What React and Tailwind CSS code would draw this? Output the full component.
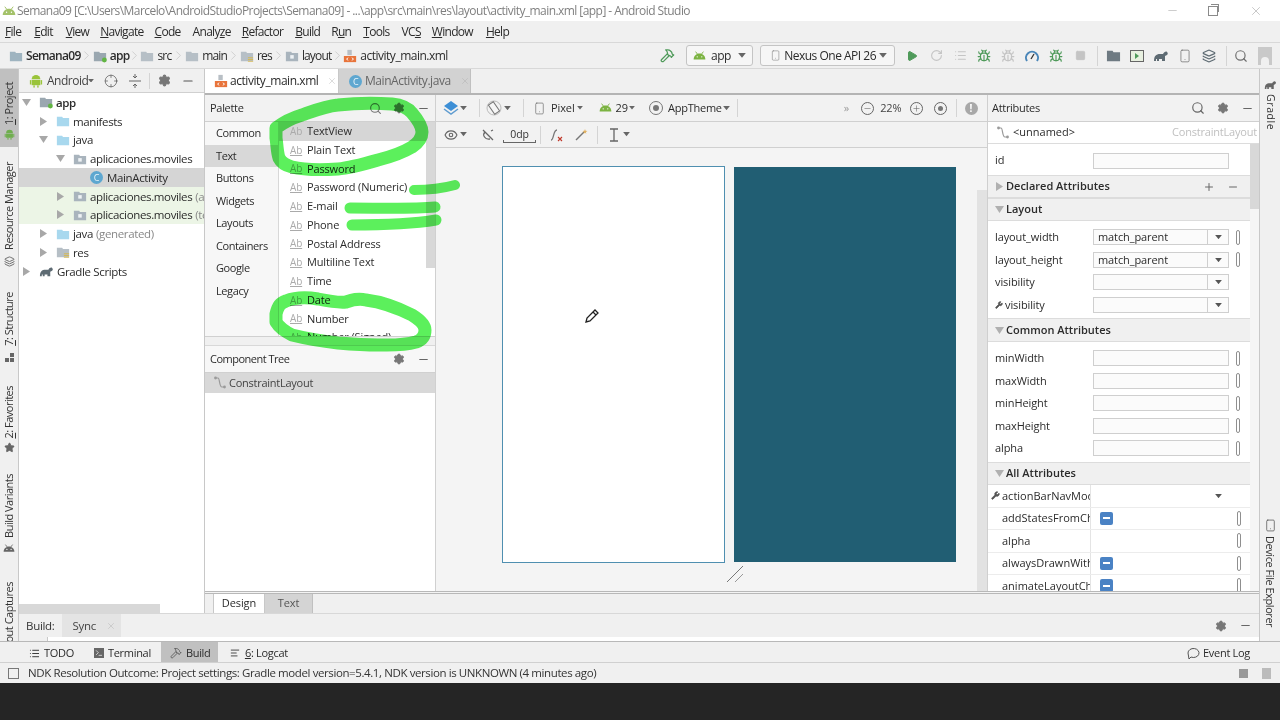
import React from "react";
import { Search, Settings, Minus, Plus, Hammer, Play, Square, ChevronRight, Eye, Smartphone, Star, Wrench, Terminal, List, AlignLeft, X, Crosshair, Bug, RotateCw, Layers } from "lucide-react";

const font = { fontFamily: '"Open Sans","Noto Sans",sans-serif' };

const Folder = ({ c = "#9aa7b0", size = 14, dot, lines }) => (
  <svg width={size} height={size} viewBox="0 0 16 16" className="shrink-0">
    <path d="M1 3h6l1 1.500h7V14H1z" fill={c} />
    {dot && <circle cx="13" cy="12.500" r="2.800" fill="#62b543" />}
    {lines && <path d="M9 10h6M9 12h6M9 14h6" stroke="#d8b84a" strokeWidth="1" />}
  </svg>
);
const PkgFolder = ({ size = 14 }) => (
  <svg width={size} height={size} viewBox="0 0 16 16" className="shrink-0">
    <path d="M1 3h6l1 1.500h7V14H1z" fill="#a9b4bd" />
    <rect x="6" y="7" width="4" height="4" fill="#eef2f5" />
  </svg>
);
const XmlIcon = ({ size = 14 }) => (
  <svg width={size} height={size} viewBox="0 0 16 16" className="shrink-0">
    <path d="M5 1h5v6H5z" fill="#b8bfc5" />
    <rect x="1" y="8" width="14" height="7" fill="#e8743b" />
    <path d="M6 10l-2 1.500L6 13M10 10l2 1.500L10 13" stroke="#fff" fill="none" strokeWidth="1" />
  </svg>
);
const ClassIcon = ({ size = 13 }) => (
  <span className="shrink-0 rounded-full bg-[#5ea7d0] text-[#e8f4fb] flex items-center justify-center text-[9px] leading-none" style={{ width: size, height: size }}>C</span>
);
const Droid = ({ c = "#9ac43a", size = 16 }) => (
  <svg width={size} height={size} viewBox="0 0 16 16" className="shrink-0">
    <path d="M3 6a5 5 0 0 1 10 0z" fill={c} />
    <rect x="3" y="6.800" width="10" height="6" fill={c} />
    <rect x="1" y="7" width="1.500" height="5" fill={c} />
    <rect x="13.500" y="7" width="1.500" height="5" fill={c} />
    <rect x="5" y="13" width="1.600" height="2.500" fill={c} />
    <rect x="9.400" y="13" width="1.600" height="2.500" fill={c} />
  </svg>
);
const DroidHead = ({ c = "#7cb342", w = 14 }) => (
  <svg width={w} height={w * 0.7} viewBox="0 0 20 14" className="shrink-0">
    <path d="M1 13c0-5 4-9 9-9s9 4 9 9z" fill={c} />
    <path d="M4 1l3 4M16 1l-3 4" stroke={c} strokeWidth="1.400" />
    <circle cx="6.500" cy="9" r="1" fill="#fff" />
    <circle cx="13.500" cy="9" r="1" fill="#fff" />
  </svg>
);
const Elephant = ({ c = "#6e7a82", w = 16 }) => (
  <svg width={w} height={w * 0.75} viewBox="0 0 16 12" className="shrink-0">
    <path d="M1 11c0-5 2-7 6-7h3c1-2 3-3 4-2 1 1 1 2 0 3l-2 1v5H9V9H6v2H4V9H3v2z" fill={c} />
  </svg>
);
const Caret = ({ open, c = "#a8a8a8" }) => (
  <svg width="9" height="9" viewBox="0 0 9 9" className="shrink-0">
    {open ? <path d="M0 1h9L4.500 8z" fill={c} /> : <path d="M1 0l7 4.500L1 9z" fill={c} />}
  </svg>
);
const DownTri = ({ c = "#666", w = 8 }) => (
  <svg width={w} height={w * 0.6} viewBox="0 0 8 5" className="shrink-0"><path d="M0 0h8L4 5z" fill={c} /></svg>
);
const Sep = ({ w = 13 }) => (
  <span className="flex justify-center shrink-0" style={{ width: w }}><ChevronRight size={15} strokeWidth={0.8} className="text-[#b0b0b0] shrink-0" /></span>
);
const Con = ({ c = "#9a9a9a" }) => (
  <svg width="14" height="14" viewBox="0 0 14 14" className="shrink-0">
    <path d="M2 2h3c2 0 1 9 4 9h3" stroke={c} fill="none" strokeWidth="1.200" />
    <circle cx="2.500" cy="2" r="1.400" fill={c} />
    <circle cx="11.500" cy="11" r="1.400" fill={c} />
  </svg>
);
const Box = ({ children }) => <span className="w-[24px] h-[20px] flex items-center justify-center shrink-0">{children}</span>;
const VSep = ({ ml = 0, h = 18 }) => <span className="w-px bg-[#d4d4d4] shrink-0" style={{ marginLeft: ml, height: h }} />;

function TitleBar() {
  return (
    <div className="h-[21px] bg-white flex items-center pl-[2px] shrink-0">
      <DroidHead c="#a4c26a" w={14} />
      <span className="ml-[1px] text-[12px] text-[#7f7f7f] tracking-[-0.56px] whitespace-nowrap">Semana09 [C:\Users\Marcelo\AndroidStudioProjects\Semana09] - ...\app\src\main\res\layout\activity_main.xml [app] - Android Studio</span>
      <div className="ml-auto flex items-center text-[#8a8a8a]">
        <Minus size={13} strokeWidth={0.8} />
        <span className="ml-[29px] w-[10px] h-[10px] border border-[#8a8a8a] relative bg-white"><span className="absolute left-[2px] top-[-3px] w-[8px] h-[8px] border-t border-r border-[#8a8a8a]" /></span>
        <X size={14} strokeWidth={0.8} className="ml-[31px] mr-[17px]" />
      </div>
    </div>
  );
}

function MenuBar() {
  const items = [["", "F", "ile", 5], ["", "E", "dit", 13], ["", "V", "iew", 13], ["", "N", "avigate", 11], ["", "C", "ode", 11], ["Analy", "z", "e", 12], ["", "R", "efactor", 11], ["", "B", "uild", 12], ["R", "u", "n", 11], ["", "T", "ools", 12], ["VC", "S", "", 12], ["", "W", "indow", 11], ["", "H", "elp", 13]];
  return (
    <div className="h-[21px] bg-[#f0f0f0] flex items-center shrink-0 text-[12px] text-[#2b2b2b] tracking-[-0.7px]">
      {items.map(([a, u, b, m]) => (
        <span key={a + u + b} style={{ marginLeft: m }} className="whitespace-nowrap">{a}<u>{u}</u>{b}</span>
      ))}
    </div>
  );
}

function Crumb({ icon, text, bold, tight }) {
  return (
    <span className={`flex items-center gap-[3px] whitespace-nowrap ${bold ? "font-semibold tracking-[-0.7px]" : tight ? "tracking-[-0.85px]" : "tracking-[-0.5px]"}`}>
      {icon}
      {text}
    </span>
  );
}

function NavBar() {
  return (
    <div className="h-[27px] bg-[#f0f0f0] border-t border-b border-[#d8d8d8] flex items-center shrink-0 text-[12px] text-[#2b2b2b] pl-[9px]">
      <Crumb bold text="Semana09" icon={<Folder c="#9fb4c0" />} />
      <Sep w={12} />
      <Crumb bold text="app" icon={<Folder c="#9aa7b0" dot />} />
      <Sep w={11} />
      <Crumb tight text="src" icon={<Folder c="#b6bfc6" />} />
      <Sep w={14} />
      <Crumb tight text="main" icon={<Folder c="#b6bfc6" />} />
      <Sep w={13} />
      <Crumb tight text="res" icon={<Folder c="#b6bfc6" lines />} />
      <Sep w={13} />
      <Crumb tight text="layout" icon={<PkgFolder />} />
      <Sep w={12} />
      <Crumb text="activity_main.xml" icon={<XmlIcon />} />
      <div className="ml-auto flex items-center tracking-[-0.5px] pr-[3px]">
        <Box><Hammer size={15} className="text-[#4f9a5a]" /></Box>
        <div className="ml-[7px] h-[21px] w-[67px] border border-[#c4c4c4] rounded-[3px] bg-[#f6f6f6] flex items-center px-[6px] gap-[5px]">
          <DroidHead c="#7cb342" w={13} /><span className="text-[12px]">app</span><span className="ml-auto"><DownTri /></span>
        </div>
        <div className="ml-[7px] h-[21px] w-[135px] border border-[#c4c4c4] rounded-[3px] bg-[#f6f6f6] flex items-center pl-[9px] pr-[7px] gap-[3px]">
          <Smartphone size={13} strokeWidth={1} className="text-[#666]" /><span className="text-[12px] whitespace-nowrap">Nexus One API 26</span><span className="ml-auto"><DownTri /></span>
        </div>
        <span className="ml-[5px]"><Box><Play size={12} fill="#4f9a5a" stroke="#4f9a5a" /></Box></span>
        <Box><RotateCw size={13} className="text-[#c4c4c4]" /></Box>
        <Box><List size={13} className="text-[#c4c4c4]" /></Box>
        <Box><Bug size={14} className="text-[#4f9a5a]" /></Box>
        <Box><Bug size={14} className="text-[#c4c4c4]" /></Box>
        <Box><svg width="14" height="12" viewBox="0 0 14 12"><path d="M2 11a6 6 0 1 1 10 0" fill="none" stroke="#4a86b8" strokeWidth="2" /><path d="M6 9l3-5" stroke="#333" strokeWidth="1.300" /></svg></Box>
        <Box><Bug size={14} className="text-[#4f9a5a]" /></Box>
        <Box><Square size={11} fill="#c4c4c4" stroke="#c4c4c4" /></Box>
        <VSep ml={5} h={20} />
        <span className="ml-[3px]"><Box><Folder c="#6e7a82" size={15} /></Box></span>
        <Box><span className="w-[14px] h-[12px] border border-[#666] bg-[#e8f0e0] flex items-center justify-center"><span className="w-0 h-0 border-y-[3px] border-y-transparent border-l-[4px] border-l-[#4f9a5a]" /></span></Box>
        <Box><Elephant c="#5e6b73" w={16} /></Box>
        <Box><Smartphone size={14} strokeWidth={1.200} className="text-[#666]" /></Box>
        <Box><Layers size={14} className="text-[#5e6b73]" /></Box>
        <VSep ml={5} h={20} />
        <span className="ml-[2px]"><Box><Search size={14} strokeWidth={2} className="text-[#6e6e6e]" /></Box></span>
        <Box><span className="w-[14px] h-[18px] bg-[#c9c9c9] flex items-end justify-center"><span className="w-[8px] h-[8px] rounded-t-full bg-[#f0f0f0]" /></span></Box>
      </div>
    </div>
  );
}

const VText = ({ children }) => (
  <span className="[writing-mode:vertical-rl] rotate-180 text-[11px] text-[#333] whitespace-nowrap tracking-[-0.5px] shrink-0">{children}</span>
);

function LeftStrip() {
  return (
    <div className="w-[19px] shrink-0 border-r border-[#c8c8c8] bg-[#f0f0f0] flex flex-col items-center overflow-hidden">
      <div className="w-full h-[78px] shrink-0 bg-[#c0c0c0] flex flex-col items-center pt-[13px] gap-[4px]">
        <VText><u>1</u>: Project</VText>
        <Droid c="#6fae4e" size={11} />
      </div>
      <div className="mt-[15px] flex flex-col items-center gap-[6px] shrink-0">
        <VText>Resource Manager</VText>
        <Layers size={11} className="text-[#666]" />
      </div>
      <div className="mt-[25px] flex flex-col items-center gap-[7px] shrink-0">
        <VText><u>7</u>: Structure</VText>
        <svg width="9" height="9" viewBox="0 0 9 9"><rect x="5" y="0" width="4" height="4" fill="#666" /><rect x="0" y="5" width="4" height="4" fill="#666" /><rect x="5" y="5" width="4" height="4" fill="#666" /></svg>
      </div>
      <div className="mt-[24px] flex flex-col items-center gap-[4px] shrink-0">
        <VText><u>2</u>: Favorites</VText>
        <Star size={11} fill="#666" stroke="#666" />
      </div>
      <div className="mt-[21px] flex flex-col items-center gap-[6px] shrink-0">
        <VText>Build Variants</VText>
        <DroidHead c="#666" w={12} />
      </div>
      <div className="mt-[29px] flex flex-col items-center shrink-0">
        <VText>Layout Captures</VText>
      </div>
    </div>
  );
}

function TreeRow({ indent, caret, icon, children, cls = "" }) {
  return (
    <div className={`h-[18.75px] shrink-0 flex items-center whitespace-nowrap overflow-hidden text-[11.5px] text-[#2b2b2b] tracking-[-0.36px] ${cls}`} style={{ paddingLeft: indent }}>
      <span className="w-[17px] shrink-0 flex">{caret}</span>
      <span className="mr-[3px] flex shrink-0">{icon}</span>
      {children}
    </div>
  );
}

function ProjectPanel() {
  return (
    <div className="w-[186px] shrink-0 flex flex-col bg-white border-r border-[#c8c8c8] overflow-hidden">
      <div className="h-[24px] bg-[#f0f0f0] border-b border-[#d0d0d0] flex items-center shrink-0 text-[#555]">
        <span className="ml-[10px]"><Droid c="#9ac43a" size={14} /></span>
        <span className="ml-[4px] text-[12px] text-[#444] tracking-[-0.5px]">Android</span>
        <DownTri w={6} />
        <Crosshair size={14} strokeWidth={1.200} className="ml-[10px]" />
        <svg width="14" height="14" viewBox="0 0 14 14" className="ml-[10px]"><path d="M1 7h12M7 0v4M5 2l2 2 2-2M7 14v-4M5 12l2-2 2 2" stroke="#666" fill="none" /></svg>
        <VSep ml={7} h={16} />
        <Settings size={13} fill="#777" className="ml-[8px] text-[#777]" />
        <Minus size={14} className="ml-[10px]" />
      </div>
      <div className="flex-1 relative flex flex-col">
        <TreeRow indent={3} caret={<Caret open />} icon={<Folder c="#9aa7b0" dot />}><span className="font-semibold">app</span></TreeRow>
        <TreeRow indent={20} caret={<Caret />} icon={<Folder c="#a8d8ee" />}>manifests</TreeRow>
        <TreeRow indent={20} caret={<Caret open />} icon={<Folder c="#a8d8ee" />}>java</TreeRow>
        <TreeRow indent={37} caret={<Caret open />} icon={<PkgFolder />}>aplicaciones.moviles</TreeRow>
        <TreeRow indent={54} caret={null} icon={<ClassIcon />} cls="bg-[#d5d5d5]"><span className="ml-[1px]">MainActivity</span></TreeRow>
        <TreeRow indent={37} caret={<Caret />} icon={<PkgFolder />} cls="bg-[#ecf5e6]">aplicaciones.moviles <span className="text-[#888] ml-[3px]">(androidTest)</span></TreeRow>
        <TreeRow indent={37} caret={<Caret />} icon={<PkgFolder />} cls="bg-[#ecf5e6]">aplicaciones.moviles <span className="text-[#888] ml-[3px]">(test)</span></TreeRow>
        <TreeRow indent={20} caret={<Caret />} icon={<Folder c="#a8d8ee" />}>java <span className="text-[#888] ml-[3px]">(generated)</span></TreeRow>
        <TreeRow indent={20} caret={<Caret />} icon={<Folder c="#b6bfc6" lines />}>res</TreeRow>
        <TreeRow indent={3} caret={<Caret />} icon={<Elephant c="#5e6b73" w={15} />}>Gradle Scripts</TreeRow>
        <div className="absolute left-0 bottom-0 w-[141px] h-[9px] bg-[#d8d8d8]" />
      </div>
    </div>
  );
}

function EditorTabs() {
  return (
    <div className="h-[26px] shrink-0 flex items-stretch border-b-2 border-[#b4b4b4] bg-[#f0f0f0] text-[12px] tracking-[-0.45px]">
      <div className="w-[134px] bg-white flex items-center pl-[9px] gap-[2px] text-[#2b2b2b] border-r border-[#c8c8c8]"><XmlIcon />activity_main.xml<X size={10} strokeWidth={1} className="ml-[7px] text-[#aaa]" /></div>
      <div className="w-[132px] bg-[#d2d2d2] flex items-center pl-[10px] gap-[3px] text-[#666] border-r border-[#c0c0c0]"><ClassIcon />MainActivity.java<X size={10} strokeWidth={1} className="ml-[6px] text-[#aaa]" /></div>
    </div>
  );
}

function Palette() {
  const cats = ["Common", "Text", "Buttons", "Widgets", "Layouts", "Containers", "Google", "Legacy"];
  const items = ["TextView", "Plain Text", "Password", "Password (Numeric)", "E-mail", "Phone", "Postal Address", "Multiline Text", "Time", "Date", "Number", "Number (Signed)"];
  return (
    <div className="w-[231px] shrink-0 flex flex-col border-r border-[#d0d0d0] bg-[#f7f7f7]">
      <div className="h-[27px] shrink-0 border-b border-[#d0d0d0] bg-[#f2f2f2] flex items-center px-[5px] text-[11px] text-[#2b2b2b] tracking-[-0.3px]">Palette
        <Search size={13} strokeWidth={2} className="ml-auto text-[#777]" />
        <Settings size={12} fill="#777" className="ml-[11px] text-[#777]" />
        <Minus size={13} className="ml-[12px] text-[#666]" />
      </div>
      <div className="h-[215px] shrink-0 flex bg-white overflow-hidden border-b border-[#d0d0d0]">
        <div className="w-[74px] shrink-0 bg-[#f7f7f7] border-r border-[#d8d8d8] text-[11px] text-[#2b2b2b] tracking-[-0.4px]">
          {cats.map(c => (
            <div key={c} className={`h-[22.5px] flex items-center pl-[11px] ${c === "Text" ? "bg-[#d8d8d8]" : ""}`}>{c}</div>
          ))}
        </div>
        <div className="flex-1 relative text-[11px] text-[#2b2b2b] tracking-[-0.15px] overflow-hidden">
          {items.map((t, i) => (
            <div key={t} className={`h-[18.75px] flex items-center pl-[11px] whitespace-nowrap ${i === 0 ? "bg-[#d6d6d6]" : ""}`}>
              <span className={`w-[17px] text-[10px] text-[#aaa] ${i === 0 ? "" : "underline"}`}>Ab</span>{t}
            </div>
          ))}
          <div className="absolute right-0 top-0 w-[9px] h-[146px] bg-[#d8d8d8]" />
        </div>
      </div>
      <div className="h-[9px] shrink-0 bg-[#f0f0f0] border-b border-[#d8d8d8]" />
      <div className="h-[27px] shrink-0 border-b border-[#d0d0d0] flex items-center px-[5px] text-[11px] text-[#2b2b2b] tracking-[-0.5px]">Component Tree
        <Settings size={12} fill="#777" className="ml-auto text-[#777]" />
        <Minus size={13} className="ml-[12px] text-[#666]" />
      </div>
      <div className="h-[20px] shrink-0 bg-[#d8d8d8] flex items-center pl-[8px] gap-[2px] text-[11px] text-[#444] tracking-[-0.25px]"><Con />ConstraintLayout</div>
      <div className="flex-1 bg-white" />
    </div>
  );
}

function DesignSurface() {
  return (
    <div className="flex-1 flex flex-col min-w-0 bg-[#f4f4f4]">
      <div className="h-[27px] shrink-0 border-b border-[#d0d0d0] flex items-center text-[11px] text-[#2b2b2b] bg-[#f2f2f2] tracking-[-0.1px]">
        <svg width="16" height="16" viewBox="0 0 16 16" className="ml-[7px] shrink-0"><path d="M8 1l7 5-7 5-7-5z" fill="#3d8fd6" /><path d="M1 9l7 5 7-5" stroke="#5f9cd0" fill="none" strokeWidth="1.500" /></svg>
        <span className="ml-[1px]"><DownTri w={7} /></span>
        <VSep ml={12} />
        <svg width="16" height="16" viewBox="0 0 16 16" className="ml-[6px] shrink-0"><circle cx="8" cy="8" r="7" fill="none" stroke="#bbb" /><rect x="5" y="2.500" width="6" height="11" transform="rotate(-35 8 8)" fill="#f6f6f6" stroke="#777" /></svg>
        <span className="ml-[2px]"><DownTri w={7} /></span>
        <VSep ml={12} />
        <Smartphone size={13} strokeWidth={1.200} className="ml-[9px] text-[#666] shrink-0" />
        <span className="ml-[5px]">Pixel</span><span className="ml-[2px]"><DownTri w={6} /></span>
        <span className="ml-[16px]"><DroidHead c="#7cb342" w={13} /></span>
        <span className="ml-[4px]">29</span><span className="ml-[1px]"><DownTri w={6} /></span>
        <span className="ml-[14px] w-[14px] h-[14px] rounded-full border border-[#777] flex items-center justify-center shrink-0"><span className="w-[6px] h-[6px] rounded-full bg-[#777]" /></span>
        <span className="ml-[5px] tracking-[-0.25px]">AppTheme</span><span className="ml-[1px]"><DownTri w={7} /></span>
        <VSep ml={7} />
        <span className="ml-[106px] text-[#999] text-[11px]">»</span>
        <span className="ml-[12px] w-[13px] h-[13px] rounded-full border border-[#666] flex items-center justify-center shrink-0"><Minus size={9} strokeWidth={1.500} className="text-[#666]" /></span>
        <span className="ml-[6px] text-[#444]">22%</span>
        <span className="ml-[8px] w-[13px] h-[13px] rounded-full border border-[#666] flex items-center justify-center shrink-0"><Plus size={9} strokeWidth={1.500} className="text-[#666]" /></span>
        <span className="ml-[11px] w-[13px] h-[13px] rounded-full border border-[#666] flex items-center justify-center shrink-0"><span className="w-[5px] h-[5px] rounded-full bg-[#777]" /></span>
        <VSep ml={9} />
        <span className="ml-[8px] w-[13px] h-[13px] rounded-full bg-[#a8a8a8] text-white font-bold flex items-center justify-center text-[10px] shrink-0">!</span>
      </div>
      <div className="h-[26px] shrink-0 border-b border-[#d0d0d0] flex items-center bg-[#f2f2f2] text-[#666]">
        <Eye size={14} className="ml-[8px] shrink-0" /><span className="ml-[2px]"><DownTri w={7} /></span>
        <svg width="14" height="14" viewBox="0 0 14 14" className="ml-[14px] shrink-0"><path d="M2 2l10 10M4 4c-3 3 0 8 5 7M10 3l2-1" stroke="#666" fill="none" strokeWidth="1.300" /></svg>
        <span className="ml-[8px] relative w-[33px] h-[16px] text-[10.5px] text-[#333] text-center leading-[14px] shrink-0 tracking-[-0.2px]">0dp<span className="absolute left-0 bottom-0 w-full h-[3px] border-x border-b border-[#666]" /></span>
        <VSep ml={4} />
        <svg width="15" height="14" viewBox="0 0 15 14" className="ml-[8px] shrink-0"><path d="M2 12c3 0 2-10 6-10" stroke="#777" fill="none" strokeWidth="1.300" /><path d="M9 9l4 4M13 9l-4 4" stroke="#c0392b" strokeWidth="1.100" /></svg>
        <svg width="15" height="14" viewBox="0 0 15 14" className="ml-[10px] shrink-0"><path d="M2 12l8-8" stroke="#777" strokeWidth="1.500" /><path d="M11 1l.6 1.800L13.500 3l-1.600 1 .4 1.800L11 4.800 9.500 5.800 10 4 8.500 3l1.900-.2z" fill="#e0b060" /></svg>
        <VSep ml={8} />
        <svg width="10" height="14" viewBox="0 0 10 14" className="ml-[11px] shrink-0"><path d="M1 1h8M5 1v12M1 13h8" stroke="#666" strokeWidth="1.300" fill="none" /></svg>
        <span className="ml-[4px]"><DownTri w={7} /></span>
      </div>
      <div className="flex-1 flex items-start pt-[18px] pl-[66px] relative min-h-0">
        <div className="w-[223px] h-[397px] bg-white border border-[#4f8fb0] shrink-0" />
        <div className="ml-[9px] mt-px w-[222px] h-[395px] bg-[#215e73] shrink-0" />
        <svg width="17" height="17" viewBox="0 0 17 17" className="absolute left-[291px] top-[417px]"><path d="M0 17L16 1" stroke="#777" strokeWidth="1" /><path d="M8 17L16 9" stroke="#999" strokeWidth="1" /></svg>
        <div className="absolute right-0 top-[42px] w-[10px] bottom-0 bg-[#e2e2e2]" />
      </div>
    </div>
  );
}

function Field({ w = 136, sel, val, link = true }) {
  return (
    <div className="flex items-center shrink-0">
      <div className="h-[16px] flex items-center bg-[#fbfbfb] border border-[#cfcfcf] text-[11px] text-[#2b2b2b] pl-[4px]" style={{ width: w }}>
        <span className="flex-1">{val}</span>
        {sel && <span className="w-[21px] h-full border-l border-[#cfcfcf] flex items-center justify-center"><DownTri c="#555" w={7} /></span>}
      </div>
      {link && <span className="ml-[7px] w-[4px] h-[15px] border border-[#8f8f8f] rounded-[2px]" />}
    </div>
  );
}

function AttrRow({ label, wrench, ...f }) {
  return (
    <div className="h-[22.5px] shrink-0 flex items-center pl-[7px] text-[11px] text-[#2b2b2b] tracking-[-0.1px]">
      <span className="w-[98px] shrink-0 flex items-center gap-[2px]">{wrench && <Wrench size={8} fill="#555" className="text-[#555]" />}{label}</span>
      <Field {...f} />
    </div>
  );
}
function Section({ title, open = true, actions, h = 24 }) {
  return (
    <div className="flex items-center pl-[7px] gap-[2px] bg-[#f0f0f0] border-y border-[#dcdcdc] font-semibold text-[11px] text-[#2b2b2b] shrink-0" style={{ height: h }}>
      <Caret open={open} c="#b0b0b0" />{title}
      {actions}
    </div>
  );
}
function AllRow({ label, wrench, check, sel, link = true }) {
  return (
    <div className="h-[22.5px] flex items-center border-b border-[#ececec] text-[11px] text-[#2b2b2b] shrink-0">
      <span className={`w-[103px] shrink-0 overflow-hidden whitespace-nowrap h-full flex items-center border-r border-[#e4e4e4] ${wrench ? "pl-[3px]" : "pl-[14px]"}`}>
        {wrench && <Wrench size={9} fill="#555" className="text-[#555] mr-[2px] shrink-0" />}{label}
      </span>
      <span className="ml-[9px] w-[13px] h-[13px] flex items-center justify-center">{check && <span className="w-[13px] h-[13px] rounded-[2px] bg-[#4a82c4] flex items-center justify-center"><span className="w-[7px] h-[2px] bg-white" /></span>}</span>
      <span className="flex-1" />
      {sel && <span className="mr-[28px]"><DownTri c="#555" w={7} /></span>}
      {link && <span className="mr-[9px] w-[4px] h-[15px] border border-[#8f8f8f] rounded-[2px]" />}
    </div>
  );
}

function Attributes() {
  return (
    <div className="w-[272px] shrink-0 flex flex-col bg-white border-l border-[#cfcfcf]">
      <div className="h-[27px] shrink-0 border-b border-[#d0d0d0] bg-[#f2f2f2] flex items-center pl-[4px] pr-[5px] text-[11px] text-[#2b2b2b] tracking-[-0.3px]">Attributes
        <Search size={14} strokeWidth={2} className="ml-auto text-[#666]" />
        <Settings size={12} fill="#777" className="ml-[12px] text-[#777]" />
        <Minus size={13} className="ml-[12px] text-[#666]" />
      </div>
      <div className="h-[22px] shrink-0 border-b border-[#dcdcdc] flex items-center pl-[8px] pr-[2px] bg-white text-[11px] text-[#2b2b2b] gap-[3px]"><Con />&lt;unnamed&gt;<span className="ml-auto text-[#c0c0c0] tracking-[-0.2px]">ConstraintLayout</span></div>
      <div className="flex-1 flex min-h-0">
        <div className="flex-1 min-w-0 flex flex-col overflow-hidden">
          <div className="h-[31px] shrink-0 flex items-center pt-[2px]">
            <div className="w-full"><AttrRow label="id" w={136} link={false} /></div>
          </div>
          <Section h={23} title="Declared Attributes" open={false} actions={<span className="ml-auto flex items-center mr-[11px] text-[#666]"><Plus size={12} /><Minus size={12} className="ml-[12px]" /></span>} />
          <Section h={23} title="Layout" />
          <div className="h-[5px] shrink-0" />
          <AttrRow label="layout_width" sel val="match_parent" />
          <AttrRow label="layout_height" sel val="match_parent" />
          <AttrRow label="visibility" sel link={false} />
          <AttrRow label="visibility" wrench sel link={false} />
          <div className="h-[2px] shrink-0" />
          <Section title="Common Attributes" />
          <div className="h-[5px] shrink-0" />
          <AttrRow label="minWidth" />
          <AttrRow label="maxWidth" />
          <AttrRow label="minHeight" />
          <AttrRow label="maxHeight" />
          <AttrRow label="alpha" />
          <div className="h-[2.5px] shrink-0" />
          <Section h={23} title="All Attributes" />
          <AllRow label="actionBarNavMode" wrench sel link={false} />
          <AllRow label="addStatesFromChildren" check />
          <AllRow label="alpha" />
          <AllRow label="alwaysDrawnWithCache" check />
          <AllRow label="animateLayoutChanges" check />
        </div>
        <div className="w-[9px] shrink-0 bg-[#f5f5f5]"><div className="h-[65px] bg-[#d8d8d8]" /></div>
      </div>
    </div>
  );
}

function RightStrip() {
  return (
    <div className="w-[21px] shrink-0 border-l border-[#c8c8c8] bg-[#f0f0f0] flex flex-col items-center pt-[11px] overflow-hidden">
      <Elephant c="#666" w={13} />
      <span className="mt-[4px] [writing-mode:vertical-rl] text-[10.5px] tracking-[0.6px] text-[#333] shrink-0">Gradle</span>
      <div className="mt-[389px] shrink-0"><Smartphone size={13} strokeWidth={1.400} className="text-[#555]" /></div>
      <span className="mt-[4px] [writing-mode:vertical-rl] text-[11px] text-[#333] whitespace-nowrap tracking-[-0.45px] shrink-0">Device File Explorer</span>
    </div>
  );
}

function Annotations() {
  return (
    <svg width="1280" height="720" viewBox="0 0 1280 720" className="absolute inset-0 pointer-events-none mix-blend-multiply" fill="none" stroke="#5cf05c" strokeLinecap="round" strokeLinejoin="round">
      <path strokeWidth="13" d="M276 128C284 122 292 118 302 115C316 110 326 106 338 105C356 103 376 103 392 104C402 105 408 108 412 113C418 120 422 126 422 132C422 138 418 143 412 147C402 153 390 157 378 160C364 164 350 168 338 169C322 170 304 170 292 167C284 165 281 162 279 158C277 152 277 144 276 138Z" />
      <path strokeWidth="10" d="M414 190C426 190 444 188 455 185" />
      <path strokeWidth="11" d="M350 208C380 208 412 209 435 207" />
      <path strokeWidth="11" d="M352 225C380 225 412 224 436 220" />
      <path strokeWidth="13" d="M276 314C278 306 280 303 286 301C296 297 306 297 318 299C328 301 338 303 346 302C352 300 358 298 366 300C382 302 398 308 412 315C420 320 425 325 425 330C425 336 422 340 416 342C402 346 390 345 378 345C364 345 350 344 338 343C320 341 304 338 292 335C284 331 279 327 276 322Z" />
    </svg>
  );
}

export default function App() {
  return (
    <div className="w-[1280px] h-[720px] relative overflow-hidden bg-[#f0f0f0] flex flex-col" style={font}>
      <TitleBar />
      <MenuBar />
      <NavBar />
      <div className="h-[572px] shrink-0 flex">
        <LeftStrip />
        <div className="flex-1 flex flex-col min-w-0">
          <div className="h-[544px] shrink-0 flex">
            <ProjectPanel />
            <div className="flex-1 flex flex-col min-w-0">
              <EditorTabs />
              <div className="flex-1 flex min-h-0">
                <Palette />
                <DesignSurface />
                <Attributes />
              </div>
              <div className="h-[3px] shrink-0 border-y border-[#b8b8b8] bg-[#f4f4f4]" />
              <div className="h-[19px] shrink-0 flex bg-[#f0f0f0] text-[11px] text-[#2b2b2b] tracking-[-0.1px]">
                <div className="w-[9px] bg-[#f0f0f0] border-r border-[#c8c8c8]" />
                <div className="w-[51px] bg-white border-r border-[#c8c8c8] flex items-center justify-center">Design</div>
                <div className="w-[48px] bg-[#d4d4d4] border-r border-[#c0c0c0] flex items-center justify-center text-[#555]">Text</div>
              </div>
            </div>
          </div>
          <div className="h-[24px] shrink-0 bg-[#f0f0f0] border-t border-[#d8d8d8] flex items-stretch text-[11.5px] text-[#333] tracking-[-0.3px]">
            <span className="flex items-center ml-[7px] mr-[7px]">Build:</span>
            <span className="flex items-center bg-[#e4e4e4] w-[59px] pl-[11px] gap-[10px] text-[#444]">Sync<X size={10} strokeWidth={1} className="text-[#aaa]" /></span>
            <div className="ml-auto flex items-center text-[#666] mr-[7px]">
              <Settings size={12} fill="#777" className="text-[#777]" />
              <Minus size={13} className="ml-[12px]" />
            </div>
          </div>
          <div className="h-[4px] shrink-0 ml-[28px] bg-white border-l border-[#c8c8c8]" />
        </div>
        <RightStrip />
      </div>
      <div className="h-[21px] shrink-0 border-t border-[#b8b8b8] bg-[#f0f0f0] flex items-stretch text-[11px] text-[#2b2b2b] tracking-[-0.3px]">
        <span className="flex items-center pt-[2px] ml-[29px] gap-[4px]"><List size={11} />TODO</span>
        <span className="flex items-center pt-[2px] ml-[20px] gap-[4px]"><span className="w-[10px] h-[10px] bg-[#666] flex items-center justify-center"><Terminal size={8} className="text-white" /></span>Terminal</span>
        <span className="flex items-center pt-[2px] ml-[10px] w-[57px] pl-[9px] gap-[4px] bg-[#c0c0c0]"><Hammer size={12} className="text-[#666] shrink-0" />Build</span>
        <span className="flex items-center pt-[2px] ml-[12px] gap-[5px]"><AlignLeft size={10} /><span><u>6</u>: Logcat</span></span>
        <span className="ml-auto mr-[30px] flex items-center pt-[2px] gap-[3px]"><svg width="13" height="13" viewBox="0 0 13 13"><path d="M1 6a5.500 4.500 0 1 1 3 4l-2 2z" fill="none" stroke="#555" /></svg>Event Log</span>
      </div>
      <div className="h-[21px] shrink-0 bg-[#f0f0f0] border-t border-[#d0d0d0] flex items-center text-[11.5px] text-[#333] tracking-[-0.4px] pl-[8px]">
        <span className="w-[11px] h-[11px] border border-[#777] mr-[9px] shrink-0" />
        <span className="whitespace-nowrap">NDK Resolution Outcome: Project settings: Gradle model version=5.4.1, NDK version is UNKNOWN (4 minutes ago)</span>
        <span className="ml-auto flex items-center gap-[14px] mr-[9px]">
          <span className="w-[9px] h-[9px] bg-[#999]" />
          <span className="w-[9px] h-[11px] bg-[#bbb]" />
        </span>
      </div>
      <div className="flex-1 bg-[#252525]" />
      <Annotations />
      <svg width="17" height="17" viewBox="0 0 17 17" className="absolute left-[584px] top-[307px]"><path d="M2 15l1-4 8-8 3 3-8 8z" fill="#fff" stroke="#222" strokeWidth="1.300" /><path d="M9 5l3 3" stroke="#222" strokeWidth="1.300" /></svg>
    </div>
  );
}
